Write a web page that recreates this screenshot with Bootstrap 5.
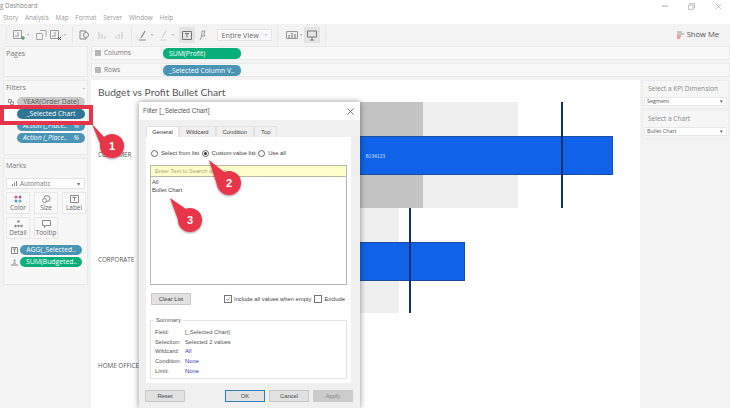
<!DOCTYPE html>
<html lang="en">
<head>
<meta charset="UTF-8">
<title>Dashboard</title>
<link href="https://cdn.jsdelivr.net/npm/bootstrap@5.3.0/dist/css/bootstrap.min.css" rel="stylesheet">
<style>
html, body { width: 730px; height: 408px; overflow: hidden; }
body { background: #f3f3f3; color: #666; font: 7px/1.2 "Open Sans", "Noto Sans", sans-serif; position: relative; }
svg { display: block; flex: none; }
.titlebar { height: 12px; background: #fff; font-size: 6.3px; color: #888; }
.win-ctl { gap: 20px; padding-right: 8px; }
.menubar { height: 12px; background: #fff; gap: 6.800px; padding-left: 3px; font-size: 6.300px; color: #999; }
.toolbar { height: 22px; padding-left: 6px; }
.tool { width: 14px; height: 16px; }
.tool.on { width: 16px; background: #e4e4e4; }
.drop-dot { width: 4px; color: #aaa; font-size: 4px; text-align: center; }
.tool-sep { width: 1px; height: 16px; background: #e6e6e6; margin: 0 4px 0 5px; }
.tool-sep.first { margin-left: 0; margin-right: 5px; }
.tg1 { margin-left: 1px; }
.tg2 { margin-left: 2.5px; }
.tg3 { margin-left: 3px; }
.tg4 { margin-left: 4px; }
.fit-box { width: 55px; height: 12px; background: #f9f9f9; border: 1px solid #e4e4e4; font-size: 7.2px; color: #666; margin-left: 7px; padding: 0 3px 0 4px; }
.show-me { margin-left: auto; padding-right: 11px; font-size: 7.6px; color: #555; gap: 3px; }
.work { height: 362px; padding-left: 3px; gap: 3px; }
.side-left { width: 85px; gap: 3px; flex: none; }
.pane { background: #f7f7f7; border: 1px solid #e9e9e9; padding: 3px 2px 3px 2px; font-size: 7px; color: #777; flex: none; }
.pane-pages { height: 31px; }
.pane-filters { height: 75px; }
.pane-marks { height: 127px; }
.pill { height: 10px; border-radius: 5px; color: #fff; font-size: 6.8px; line-height: 10px; padding: 0 6px; white-space: nowrap; overflow: hidden; }
.pill-teal { background: #4a94b5; }
.pill-dark { background: #2f7696; }
.pill-green { background: #09af78; }
.pill-grey { background: #c9c9c9; color: #555; }
.filter-row { height: 10px; margin-top: 2px; padding-left: 11px; position: relative; }
.filter-row .pill { flex: 1; }
.filter-first { margin-top: 5px; }
.filter-icon { position: absolute; left: 2px; top: 2px; }
.mark-select { height: 11px; background: #fff; border: 1px solid #e4e4e4; margin: 8px 0 3px 0; padding: 0 4px 0 5px; font-size: 6.4px; gap: 3px; }
.mark-grid { display: grid; grid-template-columns: repeat(3, 24px); gap: 3px 4px; }
.mark-btn { height: 22px; background: #f9f9f9; border: 1px solid #e8e8e8; font-size: 6.4px; color: #666; gap: 1px; }
.mark-field { margin-top: 2px; gap: 2px; padding: 0 3px 0 5px; }
.mark-field .pill { flex: 1; }
.mark-first { margin-top: 6px; }
.main { width: 639px; flex: none; gap: 3px; }
.shelf { height: 14px; flex: none; background: #f8f8f8; border: 1px solid #e9e9e9; font-size: 6.5px; color: #777; }
.shelf-label { width: 70px; padding-left: 3px; gap: 3px; border-right: 1px solid #eee; height: 100%; margin-right: 1px; }
.shelf .pill { width: 78px; height: 11px; line-height: 11px; }
.main-body { flex: 1; min-height: 0; }
.view { width: 549px; flex: none; background: #fff; padding: 5px 0 0 7px; overflow: hidden; }
.view-title { font: 10.200px/14px Lato, "Open Sans", sans-serif; color: #555; margin: 0; height: 17px; flex: none; }
.bar-row { height: 105.500px; flex: none; }
.bar-label { width: 78px; font-size: 6.3px; color: #555; flex: none; }
.bar-track { flex: 1; height: 100%; position: relative; }
.band, .actual, .target { position: absolute; left: 0; }
.band { top: 0; bottom: 0; }
.band-light { background: #efefef; }
.band-mid { background: #c4c4c4; }
.actual { top: 34px; height: 39px; background: #1063e8; border: 1px solid #1b4f9e; color: #dde9ff; font: 5.5px "Liberation Serif", serif; }
.target { top: 0; bottom: 0; width: 2px; background: #10316b; }
.side-right { width: 89px; flex: none; gap: 1px; padding-left: 2px; }
.kpi { background: #f6f6f6; border: 1px solid #ececec; padding: 2px 1px 2px 1px; color: #888; font-size: 6.6px; }
.kpi-title { padding-left: 4px; height: 11px; line-height: 11px; margin-bottom: 3px; }
.kpi-select { height: 9px; background: #fff; border: 1px solid #e8e8e8; font-size: 5.4px; color: #555; padding: 0 3px 0 2px; }
.filter-dialog { position: absolute; left: 139px; top: 102px; width: 221px; height: 306px; background: #f0f0f0; box-shadow: 0 0 6px rgba(0,0,0,.45); font: 5.800px/1.2 "Liberation Sans", Arial, sans-serif; color: #444; }
.dlg-head { height: 18px; background: #fff; padding: 0 6px 0 4px; font-size: 6.500px; color: #555; }
.dlg-tabs { padding: 6px 0 0 7px; height: 17px; }
.dlg-tab { padding: 0 6px; height: 11px; line-height: 11px; background: #f0f0f0; border: 1px solid #e2e2e2; border-bottom: 0; }
.dlg-tab.on { background: #fff; width: 33px; text-align: center; padding: 0; color: #333; }
.dlg-panel { background: #fff; margin: 0 9px 0 7px; height: 246px; padding: 10px 4px 0 4px; }
.dlg-radio { gap: 3px; height: 12px; margin-bottom: 6px; }
.dlg-radio span { margin-right: -1.500px; }
.radio-dot { width: 7px; height: 7px; border: 1px solid #666; border-radius: 50%; flex: none; position: relative; margin-left: 1px; }
.radio-dot.on::after { content: ""; position: absolute; inset: 1px; border-radius: 50%; background: #333; }
.dlg-search { height: 12px; background: #ffffcc; border: 1px solid #b9b9a5; color: #a5a57a; padding-left: 4px; line-height: 10px; }
.dlg-list { height: 108px; border: 1px solid #b5b5b5; border-top: 0; padding: 2px 1px; line-height: 7.500px; }
.dlg-btn { height: 12px; width: 40px; background: #e1e1e1; border: 1px solid #c9c9c9; border-radius: 0; font-size: 5.800px; line-height: 10px; padding: 0; color: #444; }
.dlg-btn.primary { border-color: #2e7cb8; }
.dlg-btn.off { background: #ccc; color: #888; border-color: #ccc; }
.dlg-opts { margin-top: 8px; height: 12px; padding: 0 2px 0 1px; }
.opt-group { gap: 2.500px; }
.check-box { width: 8px; height: 8px; border: 1px solid #777; background: #fff; flex: none; }
.dlg-summary { position: relative; margin-top: 15px; height: 59px; border: 1px solid #e4e4e4; padding: 7px 0 0 4px; line-height: 9.700px; color: #555; }
.dlg-summary legend { position: absolute; top: -4px; left: 3px; width: auto; background: #fff; font-size: 5.800px; line-height: 7px; margin: 0; padding: 0 2px; float: none; }
.sum-key { width: 30px; }
.sum-link { color: #3b3ba6; }
.dlg-foot { padding: 7px 7px 0 6px; }
.callouts { position: absolute; left: 0; top: 0; pointer-events: none; }
.callouts text { font: bold 11px "Liberation Sans", sans-serif; fill: #fff; text-anchor: middle; }
</style>
</head>
<body>
<div class="titlebar d-flex align-items-center justify-content-between">
    <span>g Dashboard</span>
    <div class="win-ctl d-flex align-items-center">
        <svg width="6" height="6"><path d="M0 3h6" stroke="#aaa"/></svg>
        <svg width="7" height="7"><path d="M.5 2h4.500v4.500h-4.500zM2 2V.5h4.500V5H5" fill="none" stroke="#aaa" stroke-width=".7"/></svg>
        <svg width="7" height="7"><path d="M1 1l5 5M6 1l-5 5" stroke="#aaa" stroke-width=".7"/></svg>
    </div>
</div>
<div class="menubar d-flex align-items-center">
    <span>Story</span><span>Analysis</span><span>Map</span><span>Format</span><span>Server</span><span>Window</span><span>Help</span>
</div>
<div class="toolbar d-flex align-items-center">
    <div class="tool-sep first"></div>
    <div class="tool d-flex align-items-center justify-content-center"><svg width="12" height="11"><path d="M.5 .5h8v8h-8z" fill="none" stroke="#999"/><path d="M3 7V5M5 7V2" stroke="#999"/><path d="M8 8h4M10 6v4" stroke="#3a7a55"/></svg></div>
    <span class="drop-dot">▾</span>
    <div class="tool tg4 d-flex align-items-center justify-content-center"><svg width="11" height="10"><path d="M.5 3.500h6v6h-6zM4 .5h6v6" fill="none" stroke="#aaa"/></svg></div>
    <div class="tool tg1 d-flex align-items-center justify-content-center"><svg width="12" height="11"><path d="M.5 .5h8v8h-8z" fill="none" stroke="#999"/><path d="M3 7V5M5 7V2" stroke="#999"/><path d="M8 7l3 3M11 7l-3 3" stroke="#444"/></svg></div>
    <span class="drop-dot">▾</span>
    <div class="tool-sep"></div>
    <div class="tool d-flex align-items-center justify-content-center"><svg width="10" height="11"><path d="M1 1h6v8H1z" fill="none" stroke="#888"/><circle cx="7" cy="5" r="2.500" fill="#f3f3f3" stroke="#888"/></svg></div>
    <div class="tool tg4 d-flex align-items-center justify-content-center"><svg width="10" height="9"><path d="M2 1v7M5 3v5M8 5v3" stroke="#c4c4c4"/></svg></div>
    <div class="tool tg3 d-flex align-items-center justify-content-center"><svg width="10" height="9"><path d="M2 5v3M5 3v5M8 1v7" stroke="#c4c4c4"/></svg></div>
    <div class="tool-sep"></div>
    <div class="tool d-flex align-items-center justify-content-center"><svg width="8" height="11"><path d="M2 8L6 1" stroke="#888" stroke-width="1.300"/><path d="M0 10h7" stroke="#888"/></svg></div>
    <span class="drop-dot">▾</span>
    <div class="tool tg2 d-flex align-items-center justify-content-center"><svg width="8" height="11"><path d="M2 8L6 1" stroke="#d4d4d4" stroke-width="1.300"/><path d="M0 10h7" stroke="#d4d4d4"/></svg></div>
    <span class="drop-dot">▾</span>
    <div class="tool on tg4 d-flex align-items-center justify-content-center"><svg width="10" height="9"><path d="M.5 .5h9v8h-9z" fill="none" stroke="#777"/><path d="M3 2.500h4M5 2.500v4" stroke="#777"/></svg></div>
    <div class="tool tg1 d-flex align-items-center justify-content-center"><svg width="7" height="10"><path d="M3 1h3L5 4l1 2H2l1-2zM3 6L1 10" fill="none" stroke="#888" stroke-width=".8"/></svg></div>
    <div class="fit-box d-flex align-items-center justify-content-between"><span>Entire View</span><span class="drop-dot">▾</span></div>
    <div class="tool-sep"></div>
    <div class="tool tg3 d-flex align-items-center justify-content-center"><svg width="12" height="8"><path d="M.5 .5h11v7H.5z" fill="#eee" stroke="#999"/><path d="M3 7V4M6 7V2M9 7V3" stroke="#777"/></svg></div>
    <span class="drop-dot">▾</span>
    <div class="tool on tg1 d-flex align-items-center justify-content-center"><svg width="10" height="11"><path d="M.5 1h9v6h-9zM5 7v3M3 10h4" fill="none" stroke="#777"/></svg></div>
    <div class="tool-sep"></div>
    <div class="show-me d-flex align-items-center">
        <svg width="7" height="8"><path d="M0 1h5M0 3h7" stroke="#999"/><path d="M0 5h4M0 7h3" stroke="#d9534f"/></svg>
        <span>Show Me</span>
    </div>
</div>
<div class="work d-flex">
    <div class="side-left d-flex flex-column">
        <div class="pane pane-pages">Pages</div>
        <div class="pane pane-filters">
            <div class="d-flex justify-content-between"><span>Filters</span><span>-</span></div>
            <div class="filter-row filter-first d-flex">
                <svg class="filter-icon" width="6" height="6"><path d="M.5 .5h3v3h-3zM2.500 2.500h3v3h-3z" fill="none" stroke="#999"/></svg>
                <div class="pill pill-grey text-center">YEAR(Order Date)</div>
            </div>
            <div class="filter-row d-flex"><div class="pill pill-dark text-center">_Selected Chart</div></div>
            <div class="filter-row d-flex"><div class="pill pill-teal fst-italic d-flex justify-content-between"><span>Action (_Place..</span><span>%</span></div></div>
            <div class="filter-row d-flex"><div class="pill pill-teal fst-italic d-flex justify-content-between"><span>Action (_Place..</span><span>%</span></div></div>
        </div>
        <div class="pane pane-marks">
            <div>Marks</div>
            <div class="mark-select d-flex align-items-center">
                <svg width="5" height="5"><path d="M.5 5V3M2.500 5V1.500M4.500 5V0" stroke="#888"/></svg>
                <span>Automatic</span><span class="ms-auto">▾</span>
            </div>
            <div class="mark-grid">
                <div class="mark-btn d-flex flex-column align-items-center justify-content-center">
                    <svg width="8" height="8"><circle cx="2" cy="2" r="1.500" fill="#d8576b"/><circle cx="6" cy="2" r="1.500" fill="#7d6fb0"/><circle cx="2" cy="6" r="1.500" fill="#4f9bc4"/><circle cx="6" cy="6" r="1.500" fill="#5fb09e"/></svg>
                    <span>Color</span>
                </div>
                <div class="mark-btn d-flex flex-column align-items-center justify-content-center">
                    <svg width="9" height="8"><circle cx="5" cy="3.500" r="3" fill="none" stroke="#888"/><circle cx="2.500" cy="5.500" r="2" fill="#f9f9f9" stroke="#888"/></svg>
                    <span>Size</span>
                </div>
                <div class="mark-btn d-flex flex-column align-items-center justify-content-center">
                    <svg width="9" height="8"><path d="M.5 .5h8v7h-8z" fill="none" stroke="#888"/><path d="M2.500 2.500h4M4.500 2.500v3.500" stroke="#888"/></svg>
                    <span>Label</span>
                </div>
                <div class="mark-btn d-flex flex-column align-items-center justify-content-center">
                    <svg width="9" height="8"><circle cx="4.500" cy="1.500" r="1.200" fill="#888"/><circle cx="1.500" cy="6" r="1.200" fill="#888"/><circle cx="4.500" cy="6" r="1.200" fill="#888"/><circle cx="7.500" cy="6" r="1.200" fill="#888"/></svg>
                    <span>Detail</span>
                </div>
                <div class="mark-btn d-flex flex-column align-items-center justify-content-center">
                    <svg width="9" height="8"><path d="M.5 .5h8v5H4L2.500 7.500V5.500H.5z" fill="none" stroke="#888"/></svg>
                    <span>Tooltip</span>
                </div>
            </div>
            <div class="mark-field mark-first d-flex align-items-center">
                <svg width="7" height="7"><path d="M.5 .5h6v6h-6z" fill="none" stroke="#888"/><path d="M2 2h3M3.500 2v3.500" stroke="#888"/></svg>
                <div class="pill pill-teal text-center">AGG(_Selected..</div>
            </div>
            <div class="mark-field d-flex align-items-center">
                <svg width="7" height="7"><circle cx="3.500" cy="1.500" r="1" fill="#888"/><path d="M0 6h7M2 4h3" stroke="#888"/></svg>
                <div class="pill pill-green text-center">SUM(Budgeted..</div>
            </div>
        </div>
    </div>
    <div class="main d-flex flex-column">
        <div class="shelf d-flex align-items-center">
            <div class="shelf-label d-flex align-items-center"><svg width="6" height="6"><path d="M1 0v6M3 0v6M5 0v6" stroke="#777"/></svg><span>Columns</span></div>
            <div class="pill pill-green">SUM(Profit)</div>
        </div>
        <div class="shelf d-flex align-items-center">
            <div class="shelf-label d-flex align-items-center"><svg width="6" height="6"><path d="M0 1h6M0 3h6M0 5h6" stroke="#777"/></svg><span>Rows</span></div>
            <div class="pill pill-teal">_Selected Column V..</div>
        </div>
        <div class="main-body d-flex">
            <div class="view d-flex flex-column">
                <h1 class="view-title">Budget vs Profit Bullet Chart</h1>
                <div class="bar-row d-flex align-items-center">
                    <span class="bar-label">CUSTOMER</span>
                    <div class="bar-track">
                        <div class="band band-light" style="width:342px"></div>
                        <div class="band band-mid" style="width:247px"></div>
                        <div class="actual d-flex align-items-center justify-content-end" style="width:437px"><span style="margin-right:227px">8134123</span></div>
                        <div class="target" style="left:385px"></div>
                    </div>
                </div>
                <div class="bar-row d-flex align-items-center">
                    <span class="bar-label">CORPORATE</span>
                    <div class="bar-track">
                        <div class="band band-light" style="width:223px"></div>
                        <div class="actual" style="width:289px"></div>
                        <div class="target" style="left:233px"></div>
                    </div>
                </div>
                <div class="bar-row d-flex align-items-center">
                    <span class="bar-label">HOME OFFICE</span>
                </div>
            </div>
            <div class="side-right d-flex flex-column">
                <div class="kpi">
                    <div class="kpi-title">Select a KPI Dimension</div>
                    <div class="kpi-select d-flex align-items-center justify-content-between"><span>Segment</span><span>▾</span></div>
                </div>
                <div class="kpi">
                    <div class="kpi-title">Select a Chart</div>
                    <div class="kpi-select d-flex align-items-center justify-content-between"><span>Bullet Chart</span><span>▾</span></div>
                </div>
            </div>
        </div>
    </div>
</div>

<div class="filter-dialog">
    <div class="dlg-head d-flex align-items-center justify-content-between">
        <span>Filter [_Selected Chart]</span>
        <svg width="7" height="7"><path d="M.5 .5l6 6M6.500 .5l-6 6" stroke="#555" stroke-width=".8"/></svg>
    </div>
    <div class="dlg-tabs d-flex">
        <div class="dlg-tab on">General</div><div class="dlg-tab">Wildcard</div><div class="dlg-tab">Condition</div><div class="dlg-tab">Top</div>
    </div>
    <div class="dlg-panel">
        <div class="dlg-radio d-flex align-items-center">
            <div class="radio-dot"></div><span>Select from list</span>
            <div class="radio-dot on"></div><span>Custom value list</span>
            <div class="radio-dot"></div><span>Use all</span>
        </div>
        <div class="dlg-search">Enter Text to Search or Add</div>
        <div class="dlg-list">All<br>Bullet Chart</div>
        <div class="dlg-opts d-flex align-items-center">
            <button type="button" class="btn dlg-btn">Clear List</button>
            <div class="d-flex align-items-center opt-group ms-auto">
                <svg class="check-box" viewBox="0 0 8 8"><path d="M1.500 4l2 2 3-4" fill="none" stroke="#555" stroke-width=".8"/></svg>
                <span>Include all values when empty</span>
                <div class="check-box"></div>
                <span>Exclude</span>
            </div>
        </div>
        <div class="dlg-summary">
            <legend>Summary</legend>
            <div class="d-flex"><span class="sum-key">Field:</span><span>[_Selected Chart]</span></div>
            <div class="d-flex"><span class="sum-key">Selection:</span><span>Selected 2 values</span></div>
            <div class="d-flex"><span class="sum-key">Wildcard:</span><span class="sum-link">All</span></div>
            <div class="d-flex"><span class="sum-key">Condition:</span><span class="sum-link">None</span></div>
            <div class="d-flex"><span class="sum-key">Limit:</span><span class="sum-link">None</span></div>
        </div>
    </div>
    <div class="dlg-foot d-flex">
        <button type="button" class="btn dlg-btn">Reset</button>
        <div class="d-flex gap-1 ms-auto">
            <button type="button" class="btn dlg-btn primary">OK</button>
            <button type="button" class="btn dlg-btn">Cancel</button>
            <button type="button" class="btn dlg-btn off">Apply</button>
        </div>
    </div>
</div>

<svg class="callouts" width="730" height="408">
    <defs>
        <filter id="soft" x="-30%" y="-30%" width="160%" height="160%"><feDropShadow dx="0" dy="1" stdDeviation="1" flood-color="#000" flood-opacity=".4"/></filter>
    </defs>
    <rect x="4" y="109" width="13" height="12" fill="#fff"/>
    <rect x="2" y="107" width="89" height="16" fill="none" stroke="#e8344a" stroke-width="4"/>
    <g filter="url(#soft)" fill="#e8344a">
        <path d="M92 124L104 137 118 156 102 148z"/>
        <circle cx="112" cy="146" r="12"/>
        <path d="M209 160L224 172 238 190 218 188z"/>
        <circle cx="229" cy="183" r="12"/>
        <path d="M170 198L186 209 200 228 180 225z"/>
        <circle cx="190" cy="220" r="12"/>
    </g>
    <text x="112" y="150">1</text>
    <text x="229" y="187">2</text>
    <text x="190" y="224">3</text>
</svg>
<script src="https://cdn.jsdelivr.net/npm/bootstrap@5.3.0/dist/js/bootstrap.bundle.min.js"></script>
</body>
</html>
